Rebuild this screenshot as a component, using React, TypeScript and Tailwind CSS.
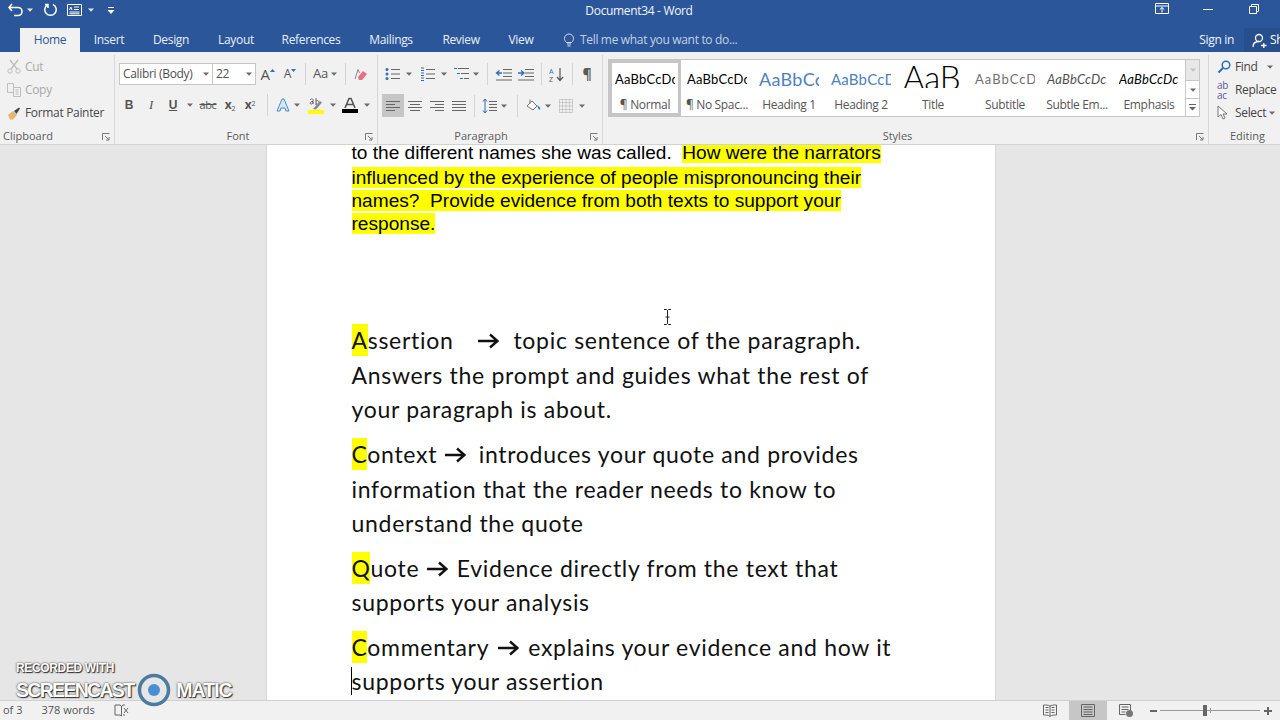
import React from "react";

const ui = "[font-family:'Open_Sans','Noto_Sans',sans-serif] tracking-[-0.33px]";

type P = { children?: React.ReactNode; w?: number; c?: string };
const Svg = ({ w = 16, h = 16, children, c = "" }: { w?: number; h?: number; children: React.ReactNode; c?: string }) => (
  <svg width={w} height={h} viewBox={`0 0 ${w} ${h}`} fill="none" className={`shrink-0 ${c}`}>{children}</svg>
);
const Caret = ({ color = "#6a6a6a" }: { color?: string }) => (
  <svg width="6" height="4" viewBox="0 0 6 4" className="shrink-0"><path d="M0 0.5h6L3 3.8z" fill={color} /></svg>
);
const Sep = ({ h = 22 }: { h?: number }) => <div className="w-px bg-[#d4d4d4] shrink-0" style={{ height: h }} />;
const Launcher = () => (
  <svg width="8" height="8" viewBox="0 0 8 8" className="shrink-0"><path d="M0.5 7V0.5H7.5M3 3l4 4M7 4v3H4" stroke="#7a7a7a" fill="none" /></svg>
);
const Lines = ({ xs, stroke = "#666" }: { xs: [number, number, number][]; stroke?: string }) => (
  <>{xs.map(([x1, x2, y], i) => <path key={i} d={`M${x1} ${y}H${x2}`} stroke={stroke} />)}</>
);
const Align = ({ kind }: { kind: "l" | "c" | "r" | "j" }) => {
  const s = { l: [[1, 15, 2.5], [1, 10, 5.5], [1, 15, 8.5], [1, 10, 11.5]], c: [[1, 15, 2.5], [3, 13, 5.5], [1, 15, 8.5], [3, 13, 11.5]], r: [[1, 15, 2.5], [6, 15, 5.5], [1, 15, 8.5], [6, 15, 11.5]], j: [[1, 15, 2.5], [1, 15, 5.5], [1, 15, 8.5], [1, 15, 11.5]] }[kind] as [number, number, number][];
  return <Svg w={16} h={14}><Lines xs={s} /></Svg>;
};

const Group = ({ w, label, children, labelClass = "justify-center" }: { w: number; label: string; children: React.ReactNode; labelClass?: string }) => (
  <div className="relative h-full border-r border-[#d8d8d8] shrink-0 flex flex-col" style={{ width: w }}>
    <div className="flex-1 min-h-0">{children}</div>
    <div className={`h-[16px] flex items-center ${labelClass} text-[11px] tracking-normal text-[#5c5c5c] relative`}>
      {label}
      <div className="absolute right-[4px] top-[5px]"><Launcher /></div>
    </div>
  </div>
);

const Cell = ({ w = 20, children, c = "" }: P) => (
  <div className={`flex items-center justify-center shrink-0 ${c}`} style={{ width: w }}>{children}</div>
);

const Style = ({ preview, label, cls = "", active = false, title = false }: { preview: string; label: string; cls?: string; active?: boolean; title?: boolean }) => (
  <div className={`w-[72px] shrink-0 h-full flex flex-col items-center overflow-hidden border-[3px] ${active ? "border-[#c6c6c6]" : "border-transparent"}`}>
    <div className={`h-[33px] w-[60px] shrink-0 overflow-hidden whitespace-nowrap flex ${title ? "items-start" : "items-center"} [font-family:'Lato',sans-serif] ${cls}`}>
      {title ? <span className="block mt-[3px] h-[22px] leading-[22px] overflow-hidden">{preview}</span> : preview}
    </div>
    <div className="text-[12px] leading-[16px] mt-[1px] text-[#555] whitespace-nowrap">{label}</div>
  </div>
);

const Arrow = ({ ml = 0, mr = 0 }: { ml?: number; mr?: number }) => (
  <svg width="22" height="18" viewBox="0 0 22 18" className="inline-block align-[-1px]" style={{ marginLeft: ml, marginRight: mr }}>
    <path d="M1 9h19M13 2.500l7.500 6.500-7.500 6.500" stroke="#111" strokeWidth="2.400" fill="none" />
  </svg>
);

const Hi = ({ children }: { children: React.ReactNode }) => <span className="bg-[#ffff00]">{children}</span>;
const HiB = ({ children }: { children: React.ReactNode }) => <span className="bg-[#ffff00] py-[2px]">{children}</span>;

const Body = ({ children, c = "" }: { children: React.ReactNode; c?: string }) => (
  <div className={`h-[34px] leading-[34px] whitespace-pre ${c}`}>{children}</div>
);

export default function App() {
  return (
    <div className={`w-[1280px] h-[720px] overflow-hidden flex flex-col relative bg-[#e6e6e6] ${ui}`}>
      {/* Title bar */}
      <div className="bg-[#2b579a] h-[52px] shrink-0 flex flex-col text-white">
        <div className="h-[27px] flex items-start">
          <div className="w-[300px] flex items-center h-[20px] pl-[8px] shrink-0">
            <Svg w={16} h={14}><path d="M4 1L1 4.5 4 8M1.5 4.5H10a4 4 0 0 1 0 8H6" stroke="#fff" strokeWidth="1.6" /></Svg>
            <Cell w={12}><Caret color="#dfe7f3" /></Cell>
            <Cell w={24} c="ml-[3px]"><Svg w={14} h={14}><path d="M9 1.5a5.7 5.7 0 1 1-5 0M4 1v4M1 1.5h3.5" stroke="#fff" strokeWidth="1.5" /></Svg></Cell>
            <Cell w={20} c="ml-[1px]"><Svg w={15} h={13}><path d="M.5.5h14v11H.5z" stroke="#fff" /><path d="M7 3h5M7 5.5h5M2.5 8h10M2.5 9.800h10" stroke="#fff" /><path d="M2.500 6l1.300-3 1.300 3" stroke="#fff" /></Svg></Cell>
            <Cell w={14}><Caret color="#dfe7f3" /></Cell>
            <Cell w={26}><Svg w={8} h={9}><path d="M1 1.500h6" stroke="#fff" /><path d="M.5 4h7L4 8z" fill="#fff" /></Svg></Cell>
          </div>
          <div className="flex-1 text-center text-[12px] leading-[21px] text-[#f2f5fa] pr-[2px]">Document34 - Word</div>
          <div className="w-[300px] shrink-0 flex justify-end items-center h-[17px] pt-[1px]">
            <Svg w={14} h={12} c="mr-[34px]"><path d="M.5.5h13v10H.5zM.5 3h13M7 9.500V4.500M4.800 6.500 7 4.500l2.200 2" stroke="#fff" /></Svg>
            <div className="w-[10px] h-px bg-white mr-[36px]" />
            <Svg w={10} h={10} c="mr-[21px]"><path d="M2.500 2.500V.5h7v7H7.500M.5 2.500h7v7h-7z" stroke="#fff" /></Svg>
          </div>
        </div>
        <div className="h-[25px] flex items-end text-[12px]">
          <div className="ml-[20px] w-[60px] h-[24px] bg-[#f1f1f1] text-[#2b579a] flex items-center justify-center">Home</div>
          {[["Insert", 58], ["Design", 66], ["Layout", 64], ["References", 86], ["Mailings", 74], ["Review", 66], ["View", 54]].map(([t, w]) => (
            <div key={t as string} className="h-[24px] flex items-center justify-center text-[#e9eef6] shrink-0" style={{ width: w as number }}>{t}</div>
          ))}
          <div className="h-[24px] flex items-center ml-[15px] text-[#c3d0e4] whitespace-nowrap">
            <Svg w={12} h={14} c="mr-[5px]"><path d="M3.500 9.500C2 8 1.500 7 1.500 5.500a4.500 4.500 0 0 1 9 0c0 1.500-.5 2.500-2 4zM4 11h4M4.500 13h3" stroke="#d5deec" /></Svg>
            Tell me what you want to do...
          </div>
          <div className="flex-1" />
          <div className="h-[24px] flex items-center text-[#f2f5fa] mr-[10px]">Sign in</div>
          <div className="h-[24px] w-[36px] bg-[#274f8d] flex items-center pl-[8px] overflow-hidden text-white whitespace-nowrap">
            <Svg w={15} h={15} c="mr-[3px]"><circle cx="7" cy="5" r="3.500" stroke="#fff" strokeWidth="1.300" /><path d="M1 14c0-3.500 2.500-5.500 6-5.500M9 12.500h5.500M11.800 10v5" stroke="#fff" strokeWidth="1.300" /></Svg>
            Share
          </div>
        </div>
      </div>

      {/* Ribbon */}
      <div className="h-[93px] shrink-0 bg-[#f1f1f1] border-b border-[#d2d2d2] flex pt-[3px] text-[#444]">
        <Group w={115} label="Clipboard" labelClass="justify-start pl-[3px]">
          <div className="flex flex-col pl-[7px] text-[12px]">
            <div className="h-[23px] flex items-center text-[#a9a9a9]">
              <Svg w={14} h={15} c="mr-[4px]"><path d="M3 1l7 9M11 1L4 10" stroke="#bdbdbd" strokeWidth="1.300" /><circle cx="3" cy="12" r="2.200" stroke="#bdbdbd" /><circle cx="11" cy="12" r="2.200" stroke="#bdbdbd" /></Svg>
              Cut
            </div>
            <div className="h-[23px] flex items-center text-[#a9a9a9]">
              <Svg w={14} h={14} c="mr-[4px]"><path d="M.5.5h6v9h-6zM6.500 4.500h7v9h-7zM8.500 7h3M8.500 9h3M8.500 11h3" stroke="#bdbdbd" /></Svg>
              Copy
            </div>
            <div className="h-[23px] flex items-center text-[#4a4a4a] whitespace-nowrap">
              <Svg w={14} h={14} c="mr-[4px]"><path d="M1 9l5-4 4 4-4 4.500H3z" fill="#e8b56e" /><path d="M7 5l5-3.500 1 1L9.500 8z" fill="#444" /></Svg>
              Format Painter
            </div>
          </div>
        </Group>

        <Group w={263} label="Font" labelClass="justify-center pr-[16px]">
          <div className="pl-[4px] pt-[8px] flex flex-col">
            <div className="flex items-center h-[22px]">
              <div className="w-[94px] h-[22px] bg-white border border-[#c6c6c6] flex items-center justify-between pl-[3px] pr-[3px] text-[12px] text-[#505050] shrink-0 whitespace-nowrap">Calibri (Body)<Caret /></div>
              <div className="w-[43px] h-[22px] bg-white border border-l-0 border-[#c6c6c6] flex items-center justify-between pl-[3px] pr-[3px] text-[12px] text-[#505050] shrink-0">22<Caret /></div>
              <Cell w={23}><span className="text-[15px] text-[#555]">A</span><svg width="5" height="3" className="mb-[8px]"><path d="M0 3l2.500-3L5 3z" fill="#2b6fb5" /></svg></Cell>
              <Cell w={22}><span className="text-[12px] text-[#555]">A</span><svg width="5" height="3" className="mb-[8px]"><path d="M0 0l2.500 3L5 0z" fill="#2b6fb5" /></svg></Cell>
              <Cell w={8}><Sep /></Cell>
              <Cell w={32} c="gap-[3px]"><span className="text-[13px] text-[#555]">Aa</span><Caret /></Cell>
              <Cell w={8}><Sep /></Cell>
              <Cell w={22}><Svg w={16} h={16}><path d="M3 13 6 3.500 7.500 7" stroke="#888" /><path d="M6 11l5-6 4 3-5 6H7z" fill="#ea6d83" /></Svg></Cell>
            </div>
            <div className="flex items-center h-[22px] mt-[9px] text-[#555]">
              <Cell w={20}><span className="font-bold text-[12px] [font-family:'Liberation_Sans']">B</span></Cell>
              <Cell w={22} c="ml-[1px]"><span className="italic text-[13px] [font-family:'Liberation_Serif']">I</span></Cell>
              <Cell w={22}><span className="font-bold underline text-[12px] [font-family:'Liberation_Sans']">U</span></Cell>
              <Cell w={12}><Caret /></Cell>
              <Cell w={24}><span className="line-through text-[11px] whitespace-nowrap">abc</span></Cell>
              <Cell w={20}><span className="font-bold text-[12px] whitespace-nowrap">x<sub className="text-[7px] font-normal">2</sub></span></Cell>
              <Cell w={20}><span className="font-bold text-[12px] whitespace-nowrap">x<sup className="text-[7px] font-normal">2</sup></span></Cell>
              <Cell w={8} c="ml-[3px]"><Sep /></Cell>
              <Cell w={24}><Svg w={16} h={16}><path d="M2 14 7 2h2l5 12h-3l-1-3H6l-1 3z" fill="#d6e6f6" stroke="#4a8cc9" /></Svg></Cell>
              <Cell w={4}><Caret /></Cell>
              <Cell w={30} c="ml-[2px]"><Svg w={18} h={17}><path d="M3 3c2-2 3-1 3 0v4M6 4.500C3 4.500 2 7 4.500 7 5.500 7 6 6 6 5" stroke="#666" /><path d="M9 1v7M9 4c2-1 3 0 3 1.500S10 8 9 6.500" stroke="#666" /><path d="M6 12l7-8 2 1.500-6 7z" fill="#8a8a8a" /><rect x="1" y="13" width="16" height="4" fill="#ffff00" /></Svg></Cell>
              <Cell w={4}><Caret /></Cell>
              <Cell w={30}><Svg w={16} h={16}><path d="M3 11 7 1.500h2L13 11M5 7.500h6" stroke="#555" strokeWidth="1.600" /><rect y="12" width="16" height="4" fill="#000" /></Svg></Cell>
              <Cell w={4}><Caret /></Cell>
            </div>
          </div>
        </Group>

        <Group w={225} label="Paragraph" labelClass="justify-center pr-[18px]">
          <div className="pl-[3px] pt-[8px] flex flex-col">
            <div className="flex items-center h-[22px]">
              <Cell w={22}><Svg w={15} h={14}><Lines xs={[[6, 15, 2.500], [6, 15, 7], [6, 15, 11.500]]} /><circle cx="2" cy="2.500" r="1.500" fill="#2b6fb5" /><circle cx="2" cy="7" r="1.500" fill="#2b6fb5" /><circle cx="2" cy="11.500" r="1.500" fill="#2b6fb5" /></Svg></Cell>
              <Cell w={12}><Caret /></Cell>
              <Cell w={22} c="ml-[1px]"><Svg w={15} h={14}><Lines xs={[[6, 15, 2.500], [6, 15, 7], [6, 15, 11.500]]} /><Lines stroke="#2b6fb5" xs={[[1, 4, 1], [1, 4, 3.500], [1, 4, 6], [1, 4, 8.500], [1, 4, 11], [1, 4, 13.500]]} /></Svg></Cell>
              <Cell w={12}><Caret /></Cell>
              <Cell w={24}><Svg w={18} h={14}><Lines xs={[[5, 16, 1.500], [8, 16, 6.500], [11, 16, 11.500]]} /><Lines stroke="#2b6fb5" xs={[[1, 4, 1.500], [4, 7, 6.500], [7, 10, 11.500]]} /></Svg></Cell>
              <Cell w={4}><Caret /></Cell>
              <Cell w={18}><Sep /></Cell>
              <Cell w={14}><Svg w={17} h={13}><Lines xs={[[8, 17, 1.500], [8, 17, 5], [8, 17, 8.500], [1, 17, 12]]} /><path d="M7 5H2M4.500 2.500 1.500 5l3 2.500" stroke="#2b6fb5" strokeWidth="1.300" /></Svg></Cell>
              <Cell w={30}><Svg w={17} h={13}><Lines xs={[[8, 17, 1.500], [8, 17, 5], [8, 17, 8.500], [1, 17, 12]]} /><path d="M1 5h5M4 2.500 7 5 4 7.500" stroke="#2b6fb5" strokeWidth="1.300" /></Svg></Cell>
              <Cell w={2}><Sep /></Cell>
              <Cell w={28}><Svg w={15} h={15}><text x="0" y="7" fontSize="7" fill="#2b6fb5" fontFamily="Open Sans">A</text><text x="0" y="14.500" fontSize="7" fill="#555" fontFamily="Open Sans">Z</text><path d="M11 1v12M8 10l3 3.500 3-3.500" stroke="#555" strokeWidth="1.200" /></Svg></Cell>
              <Cell w={4}><Sep /></Cell>
              <Cell w={26}><span className="text-[14px] font-bold text-[#5a5a5a] leading-none">¶</span></Cell>
            </div>
            <div className="flex items-center h-[23px] mt-[9px] pl-[1px]">
              <Cell w={22} c="h-[23px] bg-[#c6c6c6]"><Align kind="l" /></Cell>
              <Cell w={22}><Align kind="c" /></Cell>
              <Cell w={22}><Align kind="r" /></Cell>
              <Cell w={22}><Align kind="j" /></Cell>
              <Cell w={8}><Sep /></Cell>
              <Cell w={24}><Svg w={16} h={16}><path d="M3 1v14M1 3.500 3 1l2 2.500M1 12.500 3 15l2-2.500" stroke="#2b6fb5" /><Lines xs={[[7, 15, 3.500], [7, 15, 6.500], [7, 15, 9.500], [7, 15, 12.500]]} /></Svg></Cell>
              <Cell w={4}><Caret /></Cell>
              <Cell w={22}><Sep /></Cell>
              <Cell w={10}><Svg w={17} h={15}><path d="M2 8 7 3l5 5-4 4z" stroke="#777" fill="#fff" /><path d="M5 1.500v4" stroke="#777" /><path d="M12 7l3.500 3-1.500 2z" fill="#2b6fb5" /></Svg></Cell>
              <Cell w={20}><Caret /></Cell>
              <Cell w={16}><Svg w={14} h={14}><path d="M.5.5h13v13H.5zM7 .5v13M.5 7h13M3.500.5v13M10.500.5v13M.5 3.500h13M.5 10.500h13" stroke="#aaa" strokeDasharray="1 1" /></Svg></Cell>
              <Cell w={16}><Caret /></Cell>
            </div>
          </div>
        </Group>

        <Group w={606} label="Styles" labelClass="justify-center pr-[16px]">
          <div className="pl-[5px] pt-[4px]">
            <div className="w-[592px] h-[58px] bg-white border border-[#c6c6c6] flex items-stretch">
              <Style active preview="AaBbCcDc" label="¶ Normal" cls="text-[13px] tracking-[0.2px] text-black" />
              <Style preview="AaBbCcDc" label="¶ No Spac..." cls="text-[13px] tracking-[0.2px] text-black" />
              <Style preview="AaBbCc" label="Heading 1" cls="text-[18px] tracking-[0.3px] text-[#4f81bd]" />
              <Style preview="AaBbCcD" label="Heading 2" cls="text-[15px] tracking-[0.2px] text-[#4f81bd]" />
              <Style title preview="AaB" label="Title" cls="text-[33px] text-black font-light" />
              <Style preview="AaBbCcD" label="Subtitle" cls="text-[13px] text-[#707070] tracking-[1px]" />
              <Style preview="AaBbCcDc" label="Subtle Em..." cls="text-[13px] tracking-[0.2px] text-[#505050] italic" />
              <Style preview="AaBbCcDc" label="Emphasis" cls="text-[13px] tracking-[0.2px] text-black italic" />
              <div className="flex-1" />
              <div className="w-[14px] flex flex-col border-l border-[#c6c6c6] shrink-0">
                <div className="h-[20px] bg-[#e8e8e8] flex items-center justify-center"><Caret color="#c0c0c0" /></div>
                <div className="h-[19px] border-y border-[#c6c6c6] flex items-center justify-center"><Caret /></div>
                <div className="h-[17px] flex items-center justify-center"><Svg w={7} h={7}><path d="M0 .5h7" stroke="#666" /><path d="M0 3h7L3.500 6.500z" fill="#666" /></Svg></div>
              </div>
            </div>
          </div>
        </Group>

        <div className="flex-1 h-full flex flex-col text-[12px] text-[#444]">
          <div className="flex-1 pl-[8px] whitespace-nowrap overflow-hidden">
            <div className="h-[23px] flex items-center">
              <Svg w={14} h={14} c="mr-[4px]"><circle cx="9" cy="5" r="3.800" stroke="#2b6fb5" strokeWidth="1.500" /><path d="M6 8 1.500 12.500" stroke="#2b6fb5" strokeWidth="2" /></Svg>
              Find<span className="ml-[9px]"><Caret /></span>
            </div>
            <div className="h-[23px] flex items-center">
              <span className="mr-[2px] text-[10px] leading-[10px] text-[#5f57a0] w-[16px] shrink-0">ab<br />ac</span>
              Replace
            </div>
            <div className="h-[23px] flex items-center">
              <Svg w={13} h={16} c="mr-[5px]"><path d="M1 1v11l3-2.500L6 14l2-1-2-4h4z" stroke="#777" fill="#fff" /></Svg>
              Select<span className="ml-[3px]"><Caret /></span>
            </div>
          </div>
          <div className="h-[16px] flex items-center justify-center pl-[6px] text-[11px] tracking-normal text-[#5c5c5c]">Editing</div>
        </div>
      </div>

      {/* Document */}
      <div className="flex-1 min-h-0 flex justify-center overflow-hidden pr-[19px]">
        <div className="w-[730px] h-full bg-white border-x border-[#d8d8d8] pl-[84px] overflow-hidden shrink-0 text-black tracking-normal">
          <div className="[font-family:'Liberation_Sans',Arial,sans-serif] text-[19.1px] leading-[23px] -mt-[4px] pl-[1px] whitespace-pre">
            <div>to the different names she was called.  <Hi>How were the narrators</Hi></div>
            <div className="mt-[2px]"><Hi>influenced by the experience of people mispronouncing their</Hi></div>
            <div><Hi>names?  Provide evidence from both texts to support your</Hi></div>
            <div><Hi>response.</Hi></div>
          </div>
          <div className="[font-family:'Lato','Noto_Sans',sans-serif] text-[23px] tracking-[0.7px] text-[#111] mt-[88px] pl-[1px]">
            <Body><HiB>A</HiB>ssertion<Arrow ml={24} mr={14} />topic sentence of the paragraph.</Body>
            <Body c="mt-[1px]">Answers the prompt and guides what the rest of</Body>
            <Body>your paragraph is about.</Body>
            <Body c="mt-[11px]"><HiB>C</HiB>ontext <Arrow mr={13} />introduces your quote and provides</Body>
            <Body c="mt-[1px]">information that the reader needs to know to</Body>
            <Body>understand the quote</Body>
            <Body c="mt-[11px]"><HiB>Q</HiB>uote <Arrow mr={9} />Evidence directly from the text that</Body>
            <Body>supports your analysis</Body>
            <Body c="mt-[11px]"><HiB>C</HiB>ommentary <Arrow ml={2} mr={9} />explains your evidence and how it</Body>
            <Body><span className="border-l border-black -ml-px">s</span>upports your assertion</Body>
          </div>
        </div>
      </div>

      {/* Status bar */}
      <div className="h-[20px] shrink-0 bg-[#f1f1f1] border-t border-[#d0d0d0] flex items-center text-[11px] tracking-normal text-[#555] relative z-0">
        <span className="ml-[3px] whitespace-nowrap">of 3</span>
        <span className="ml-[19px] whitespace-nowrap">378 words</span>
        <Svg w={15} h={13} c="ml-[19px]"><path d="M6 1H1v10h5l1.500 1V2zM8 2.500 9 1h2M9 11h2" stroke="#666" /><path d="M10 4l4 5M14 4l-4 5" stroke="#666" /></Svg>
        <div className="flex-1" />
        <Cell w={38}><Svg w={14} h={13}><path d="M7 2C5.500 1 3 1 .5 1v10c2.500 0 5 0 6.500 1.500C8.500 11 11 11 13.500 11V1C11 1 8.500 1 7 2zM7 2v10M2.500 3.500h3M2.500 6h3M2.500 8.500h3M8.500 3.500h3M8.500 6h3M8.500 8.500h3" stroke="#666" /></Svg></Cell>
        <Cell w={38} c="h-[19px] bg-[#c6c6c6]"><Svg w={14} h={13}><path d="M.5.500h13v12H.5zM2.500 3h9M2.500 5.500h9M2.500 8h9M2.500 10.500h9" stroke="#666" /></Svg></Cell>
        <Cell w={38}><Svg w={14} h={13}><path d="M.5.500h11v8M.5.500v10h6M2.500 3h7M2.500 5.500h7M2.500 8h4" stroke="#666" /><circle cx="10.500" cy="9.500" r="3.500" fill="#777" /></Svg></Cell>
        <div className="w-[7px] h-[2px] bg-[#666] ml-[5px]" />
        <div className="w-[100px] h-px bg-[#999] ml-[3px] relative">
          <div className="absolute left-[43px] -top-[5px] w-[4px] h-[11px] bg-[#666]" />
          <div className="absolute left-[50px] -top-[2px] w-px h-[5px] bg-[#999]" />
        </div>
        <div className="ml-[4px] mr-[8px] relative w-[8px] h-[8px]">
          <div className="absolute left-0 top-[3px] w-[8px] h-[2px] bg-[#666]" />
          <div className="absolute left-[3px] top-0 w-[2px] h-[8px] bg-[#666]" />
        </div>
      </div>

      {/* Watermark */}
      <div className="absolute left-[16px] top-[661px] z-10 text-white font-bold [font-family:'Liberation_Sans',sans-serif] pointer-events-none [text-shadow:0_0_2px_#222,1px_1px_1px_#333]">
        <div className="text-[12px] leading-[14px] tracking-[-0.35px]">RECORDED WITH</div>
        <div className="flex items-center text-[19.5px] leading-[30px] tracking-[-1.7px] whitespace-nowrap">
          SCREENCAST
          <svg width="34" height="34" viewBox="0 0 34 34" className="ml-[4px] mr-[5px] -my-[4px] shrink-0"><circle cx="17" cy="17" r="14.500" fill="#e6e6e6" stroke="#4b7b9e" strokeWidth="3.500" /><circle cx="17" cy="17" r="6" fill="#4a90d0" /></svg>
          <span className="tracking-[-1px]">MATIC</span>
        </div>
      </div>

      {/* I-beam cursor */}
      <svg width="9" height="16" viewBox="0 0 9 16" className="absolute left-[663px] top-[309px] z-10"><path d="M1 .5h2.500L4.500 1.500 5.500.5H8M4.500 1.500v13M1 15.500h2.500l1-1 1 1H8M2.500 8h4" stroke="#222" fill="none" /></svg>
    </div>
  );
}
